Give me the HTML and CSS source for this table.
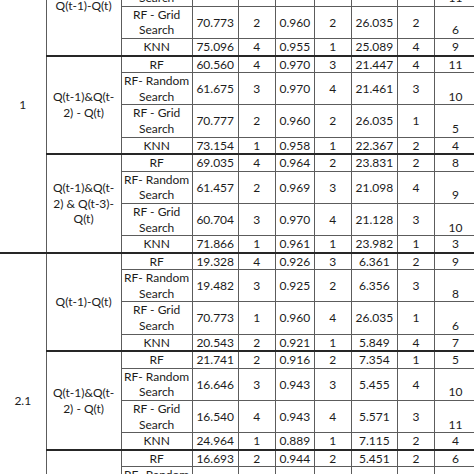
FILE: index.html
```html
<!DOCTYPE html>
<html>
<head>
<meta charset="utf-8">
<link rel="stylesheet" href="styles.css">
</head>
<body>
<table class="results">
  <colgroup>
    <col class="c-case"><col class="c-input"><col class="c-model">
    <col class="c-num"><col class="c-rank"><col class="c-num2"><col class="c-rank">
    <col class="c-num"><col class="c-rank"><col class="c-total">
  </colgroup>
  <tbody>
    <!-- Case 1 -->
    <tr class="grp">
      <td class="case" rowspan="12">1</td>
      <td class="input" rowspan="4">Q(t-1)-Q(t)</td>
      <td class="model">RF</td>
      <td></td><td></td><td></td><td></td><td></td><td></td><td class="total"></td>
    </tr>
    <tr>
      <td class="model">RF- Random<br>Search</td>
      <td></td><td></td><td></td><td></td><td></td><td></td><td class="total">11</td>
    </tr>
    <tr>
      <td class="model">RF - Grid<br>Search</td>
      <td>70.773</td><td>2</td><td>0.960</td><td>2</td><td>26.035</td><td>2</td><td class="total">6</td>
    </tr>
    <tr>
      <td class="model">KNN</td>
      <td>75.096</td><td>4</td><td>0.955</td><td>1</td><td>25.089</td><td>4</td><td class="total">9</td>
    </tr>

    <tr class="sub">
      <td class="input" rowspan="4">Q(t-1)&amp;Q(t-<br>2) - Q(t)</td>
      <td class="model">RF</td>
      <td>60.560</td><td>4</td><td>0.970</td><td>3</td><td>21.447</td><td>4</td><td class="total">11</td>
    </tr>
    <tr>
      <td class="model">RF- Random<br>Search</td>
      <td>61.675</td><td>3</td><td>0.970</td><td>4</td><td>21.461</td><td>3</td><td class="total">10</td>
    </tr>
    <tr>
      <td class="model">RF - Grid<br>Search</td>
      <td>70.777</td><td>2</td><td>0.960</td><td>2</td><td>26.035</td><td>1</td><td class="total">5</td>
    </tr>
    <tr>
      <td class="model">KNN</td>
      <td>73.154</td><td>1</td><td>0.958</td><td>1</td><td>22.367</td><td>2</td><td class="total">4</td>
    </tr>

    <tr class="sub">
      <td class="input" rowspan="4">Q(t-1)&amp;Q(t-<br>2) &amp; Q(t-3)-<br>Q(t)</td>
      <td class="model">RF</td>
      <td>69.035</td><td>4</td><td>0.964</td><td>2</td><td>23.831</td><td>2</td><td class="total">8</td>
    </tr>
    <tr>
      <td class="model">RF- Random<br>Search</td>
      <td>61.457</td><td>2</td><td>0.969</td><td>3</td><td>21.098</td><td>4</td><td class="total">9</td>
    </tr>
    <tr>
      <td class="model">RF - Grid<br>Search</td>
      <td>60.704</td><td>3</td><td>0.970</td><td>4</td><td>21.128</td><td>3</td><td class="total">10</td>
    </tr>
    <tr>
      <td class="model">KNN</td>
      <td>71.866</td><td>1</td><td>0.961</td><td>1</td><td>23.982</td><td>1</td><td class="total">3</td>
    </tr>

    <!-- Case 2.1 -->
    <tr class="grp">
      <td class="case" rowspan="12">2.1</td>
      <td class="input" rowspan="4">Q(t-1)-Q(t)</td>
      <td class="model">RF</td>
      <td>19.328</td><td>4</td><td>0.926</td><td>3</td><td>6.361</td><td>2</td><td class="total">9</td>
    </tr>
    <tr>
      <td class="model">RF- Random<br>Search</td>
      <td>19.482</td><td>3</td><td>0.925</td><td>2</td><td>6.356</td><td>3</td><td class="total">8</td>
    </tr>
    <tr>
      <td class="model">RF - Grid<br>Search</td>
      <td>70.773</td><td>1</td><td>0.960</td><td>4</td><td>26.035</td><td>1</td><td class="total">6</td>
    </tr>
    <tr>
      <td class="model">KNN</td>
      <td>20.543</td><td>2</td><td>0.921</td><td>1</td><td>5.849</td><td>4</td><td class="total">7</td>
    </tr>

    <tr class="sub">
      <td class="input" rowspan="4">Q(t-1)&amp;Q(t-<br>2) - Q(t)</td>
      <td class="model">RF</td>
      <td>21.741</td><td>2</td><td>0.916</td><td>2</td><td>7.354</td><td>1</td><td class="total">5</td>
    </tr>
    <tr>
      <td class="model">RF- Random<br>Search</td>
      <td>16.646</td><td>3</td><td>0.943</td><td>3</td><td>5.455</td><td>4</td><td class="total">10</td>
    </tr>
    <tr>
      <td class="model">RF - Grid<br>Search</td>
      <td>16.540</td><td>4</td><td>0.943</td><td>4</td><td>5.571</td><td>3</td><td class="total">11</td>
    </tr>
    <tr>
      <td class="model">KNN</td>
      <td>24.964</td><td>1</td><td>0.889</td><td>1</td><td>7.115</td><td>2</td><td class="total">4</td>
    </tr>

    <tr class="sub">
      <td class="input" rowspan="4">Q(t-1)&amp;Q(t-<br>2) &amp; Q(t-3)-<br>Q(t)</td>
      <td class="model">RF</td>
      <td>16.693</td><td>2</td><td>0.944</td><td>2</td><td>5.451</td><td>2</td><td class="total">6</td>
    </tr>
    <tr>
      <td class="model">RF- Random<br>Search</td>
      <td></td><td></td><td></td><td></td><td></td><td></td><td class="total"></td>
    </tr>
    <tr>
      <td class="model">RF - Grid<br>Search</td>
      <td></td><td></td><td></td><td></td><td></td><td></td><td class="total"></td>
    </tr>
    <tr>
      <td class="model">KNN</td>
      <td></td><td></td><td></td><td></td><td></td><td></td><td class="total"></td>
    </tr>
  </tbody>
</table>
</body>
</html>
```

FILE: styles.css
```css
html, body {
  margin: 0;
  padding: 0;
  background: #ffffff;
  overflow: hidden;
}

body {
  width: 474px;
  height: 474px;
}

.results {
  border-collapse: collapse;
  table-layout: fixed;
  width: 477px;
  margin-top: -44px;
  font-family: Lato, "Open Sans", sans-serif;
  font-size: 12px;
  color: #1c1c1c;
}

.c-case  { width: 46px; }
.c-input { width: 75px; }
.c-model { width: 71px; }
.c-num   { width: 46px; }
.c-rank  { width: 37px; }
.c-num2  { width: 39px; }
.c-total { width: 42px; }

.results td {
  border: 1px solid #5c5c5c;
  padding: 0;
  line-height: 15.6px;
  text-align: center;
  vertical-align: middle;
  white-space: nowrap;
}

.results td.case {
  border-left: none;
}

.results td.total {
  vertical-align: bottom;
}

.results tr.sub td,
.results tr.grp td {
  border-top: 2px solid #262626;
}
```
